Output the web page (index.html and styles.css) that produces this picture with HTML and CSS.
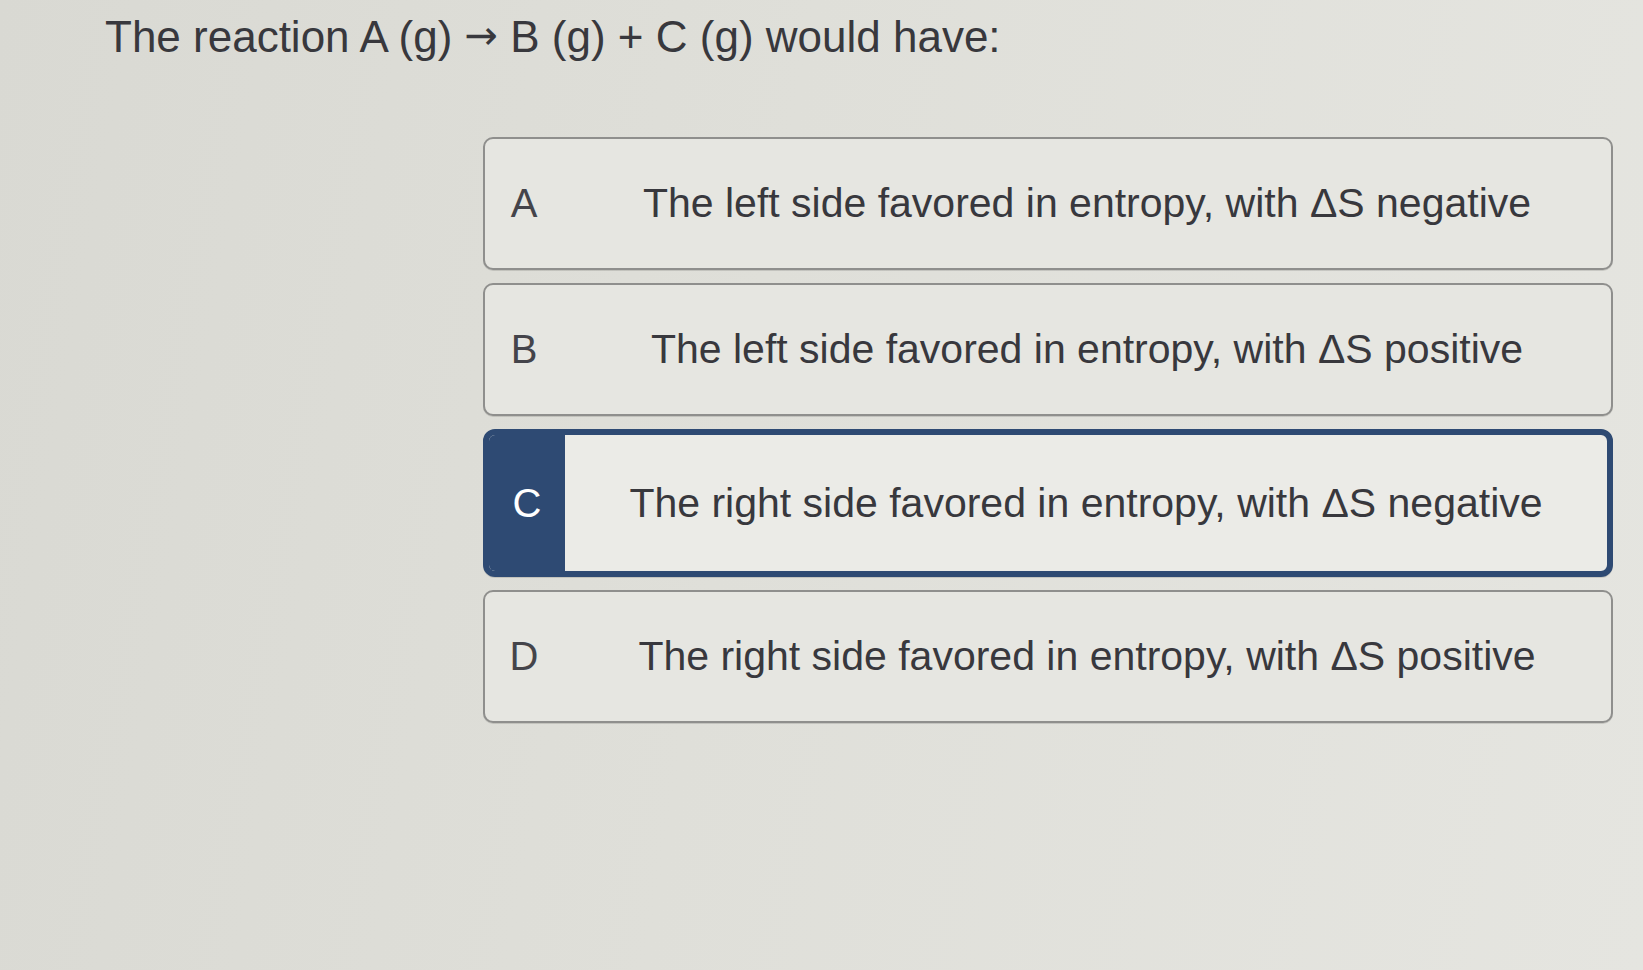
FILE: index.html
```html
<!DOCTYPE html>
<html>

<head>
  <meta charset="utf-8">
  <link rel="stylesheet" href="styles.css">
</head>

<body>
  <div class="question">
    <h1 class="question-title">The reaction A (g) <span class="arrow">→</span> B (g) + C (g) would have:</h1>

    <ol class="choices">
      <li class="choice">
        <span class="choice-letter">A</span>
        <span class="choice-text">The left side favored in entropy, with ΔS negative</span>
      </li>
      <li class="choice">
        <span class="choice-letter">B</span>
        <span class="choice-text">The left side favored in entropy, with ΔS positive</span>
      </li>
      <li class="choice selected">
        <span class="choice-letter">C</span>
        <span class="choice-text">The right side favored in entropy, with ΔS negative</span>
      </li>
      <li class="choice">
        <span class="choice-letter">D</span>
        <span class="choice-text">The right side favored in entropy, with ΔS positive</span>
      </li>
    </ol>
  </div>
</body>

</html>
```

FILE: styles.css
```css
body {
  margin: 0;
  min-height: 100vh;
  font-family: "Liberation Sans", Arial, sans-serif;
  color: #3a3a3f;
  background: linear-gradient(100deg, #d9d9d3 0%, #dfdfd9 45%, #e5e5e0 100%);
}

.question {
  display: flex;
  flex-direction: column;
  padding-top: 12px;
}

.question-title {
  margin: 0 0 0 105px;
  font-size: 44px;
  font-weight: normal;
  line-height: 50px;
  color: #38383d;
}

.arrow {
  font-family: "DejaVu Sans", sans-serif;
  font-size: 40px;
  line-height: 0;
  position: relative;
  top: -3px;
}

.choices {
  list-style: none;
  margin: 75px 0 0 483px;
  padding: 0;
  width: 1130px;
  display: flex;
  flex-direction: column;
  gap: 13px;
}

.choice {
  box-sizing: border-box;
  height: 133px;
  display: flex;
  border: 2px solid #8f8f8d;
  border-radius: 10px;
  background: #e6e6e1;
  box-shadow: 0 1px 0 rgba(0, 0, 0, 0.12);
  overflow: hidden;
}

.choice-letter {
  width: 78px;
  display: flex;
  align-items: center;
  justify-content: center;
  font-size: 40px;
  color: #44444a;
}

.choice-text {
  flex: 1;
  display: flex;
  align-items: center;
  justify-content: center;
  font-size: 41px;
  color: #38383d;
}

.choice.selected {
  height: 148px;
  border: 6px solid #2e4a73;
  border-radius: 12px;
  background: #ebebe7;
}

.choice.selected .choice-letter {
  width: 76px;
  background: #2e4a73;
  color: #ffffff;
}
```
